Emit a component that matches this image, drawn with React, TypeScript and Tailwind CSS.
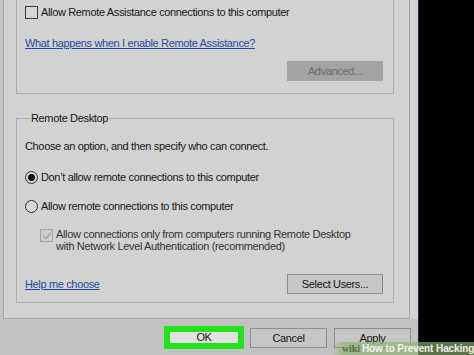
import React from 'react';

const Btn: React.FC<{ label: string; muted?: boolean; className?: string }> = ({ label, muted, className }) => (
    <div
        className={`flex items-center justify-center h-[20px] border ${muted ? 'bg-[#a3a3a3] border-[#a3a3a3] text-[#6b6b6b]' : 'bg-[#c6c6c6] border-[#8d8d8d] text-[#151515]'} ${className || ''}`}
    >
        {label}
    </div>
);

const CheckBox: React.FC<{ checked?: boolean; disabled?: boolean }> = ({ checked, disabled }) => (
    <div className={`w-[13px] h-[13px] shrink-0 border flex items-center justify-center ${disabled ? 'border-[#a2a2a2] bg-[#cdcdcd]' : 'border-[#3a3a3a] bg-[#d6d6d6]'}`}>
        {checked && (
            <svg width="10" height="10" viewBox="0 0 10 10">
                <path d="M1.5 5.2 L4 7.6 L8.6 2.2" fill="none" stroke="#a0a0a0" strokeWidth="1.4" />
            </svg>
        )}
    </div>
);

const Radio: React.FC<{ selected?: boolean }> = ({ selected }) => (
    <div className="w-[13px] h-[13px] shrink-0 rounded-full border border-[#2a2a2a] bg-[#d8d8d8] flex items-center justify-center">
        {selected && <div className="w-[7px] h-[7px] rounded-full bg-[#0d0d0d]" />}
    </div>
);

const App: React.FC = () => {
    return (
        <div className="relative w-[474px] h-[355px] overflow-hidden flex bg-black font-['Liberation_Sans',Arial,sans-serif] text-[11px] leading-[13px] tracking-[-0.35px] text-[#161616]">
            <div className="w-[419px] shrink-0 flex flex-col bg-[#c2c2c2] border-r border-[#1d2b5c]">
                <div className="h-[319px] flex">
                    <div className="w-[3px] bg-[#c4c4c4]" />
                    <div className="w-[407px] bg-[#d2d2d2] border-x border-b border-[#a6a6a6] pl-[12px]">
                        {/* Remote Assistance group */}
                        <div className="w-[378px] h-[94px] border-x border-b border-[#adadad] pl-[8px] pr-[10px] flex flex-col">
                            <div className="flex items-center gap-[3px] pt-[6px]">
                                <CheckBox />
                                <span>Allow Remote Assistance connections to this computer</span>
                            </div>
                            <span className="mt-[18px] text-[#1f4c9c] underline">What happens when I enable Remote Assistance?</span>
                            <div className="flex justify-end mt-[11px]">
                                <Btn label="Advanced..." muted className="w-[96px]" />
                            </div>
                        </div>

                        {/* Remote Desktop group */}
                        <fieldset className="w-[378px] h-[190px] mt-[19px] border border-[#adadad] pl-[8px] pr-[10px]">
                            <legend className="ml-[5px] px-[1px] leading-[11px]">Remote Desktop</legend>
                            <div className="flex flex-col">
                                <span className="mt-[16px]">Choose an option, and then specify who can connect.</span>
                                <div className="flex items-center gap-[3px] mt-[18px]">
                                    <Radio selected />
                                    <span>Don’t allow remote connections to this computer</span>
                                </div>
                                <div className="flex items-center gap-[3px] mt-[16px]">
                                    <Radio />
                                    <span>Allow remote connections to this computer</span>
                                </div>
                                <div className="flex items-start gap-[3px] mt-[15px] pl-[15px]">
                                    <div className="pt-[1px]">
                                        <CheckBox checked disabled />
                                    </div>
                                    <span className="leading-[12px] text-[#333]">
                                        Allow connections only from computers running Remote Desktop
                                        <br />
                                        with Network Level Authentication (recommended)
                                    </span>
                                </div>
                                <div className="flex items-center justify-between mt-[22px]">
                                    <span className="text-[#1f4c9c] underline">Help me choose</span>
                                    <Btn label="Select Users..." className="w-[96px]" />
                                </div>
                            </div>
                        </fieldset>
                    </div>
                    <div className="w-[8px] bg-[#d3d3d3]" />
                </div>

                <div className="flex-1 flex justify-end items-start pt-[7px] pr-[7px] gap-[6px]">
                    <div className="w-[80px] h-[23px] bg-[#22e41c] p-[6px] flex">
                        <div className="flex-1 bg-[#e2e2e2] flex items-center justify-center">OK</div>
                    </div>
                    <Btn label="Cancel" className="w-[77px] mt-[2px]" />
                    <Btn label="Apply" className="w-[77px] mt-[2px] ml-[1px]" />
                </div>
            </div>
            <div className="flex-1" />

            {/* wikiHow watermark */}
            <div className="absolute right-0 bottom-0 w-[142px] h-[13px] whitespace-nowrap bg-gradient-to-r from-transparent via-[rgba(140,178,109,0.65)] via-[8%] to-[rgba(140,178,109,0.65)] flex items-center pl-[10px] text-[10px] tracking-[-0.1px] leading-[13px] font-bold">
                <span className="font-['Liberation_Serif',serif] text-[#55704a]">wiki</span>
                <span className="text-white/90 ml-[2px]">How to Prevent Hacking</span>
            </div>
        </div>
    );
};

export default App;
